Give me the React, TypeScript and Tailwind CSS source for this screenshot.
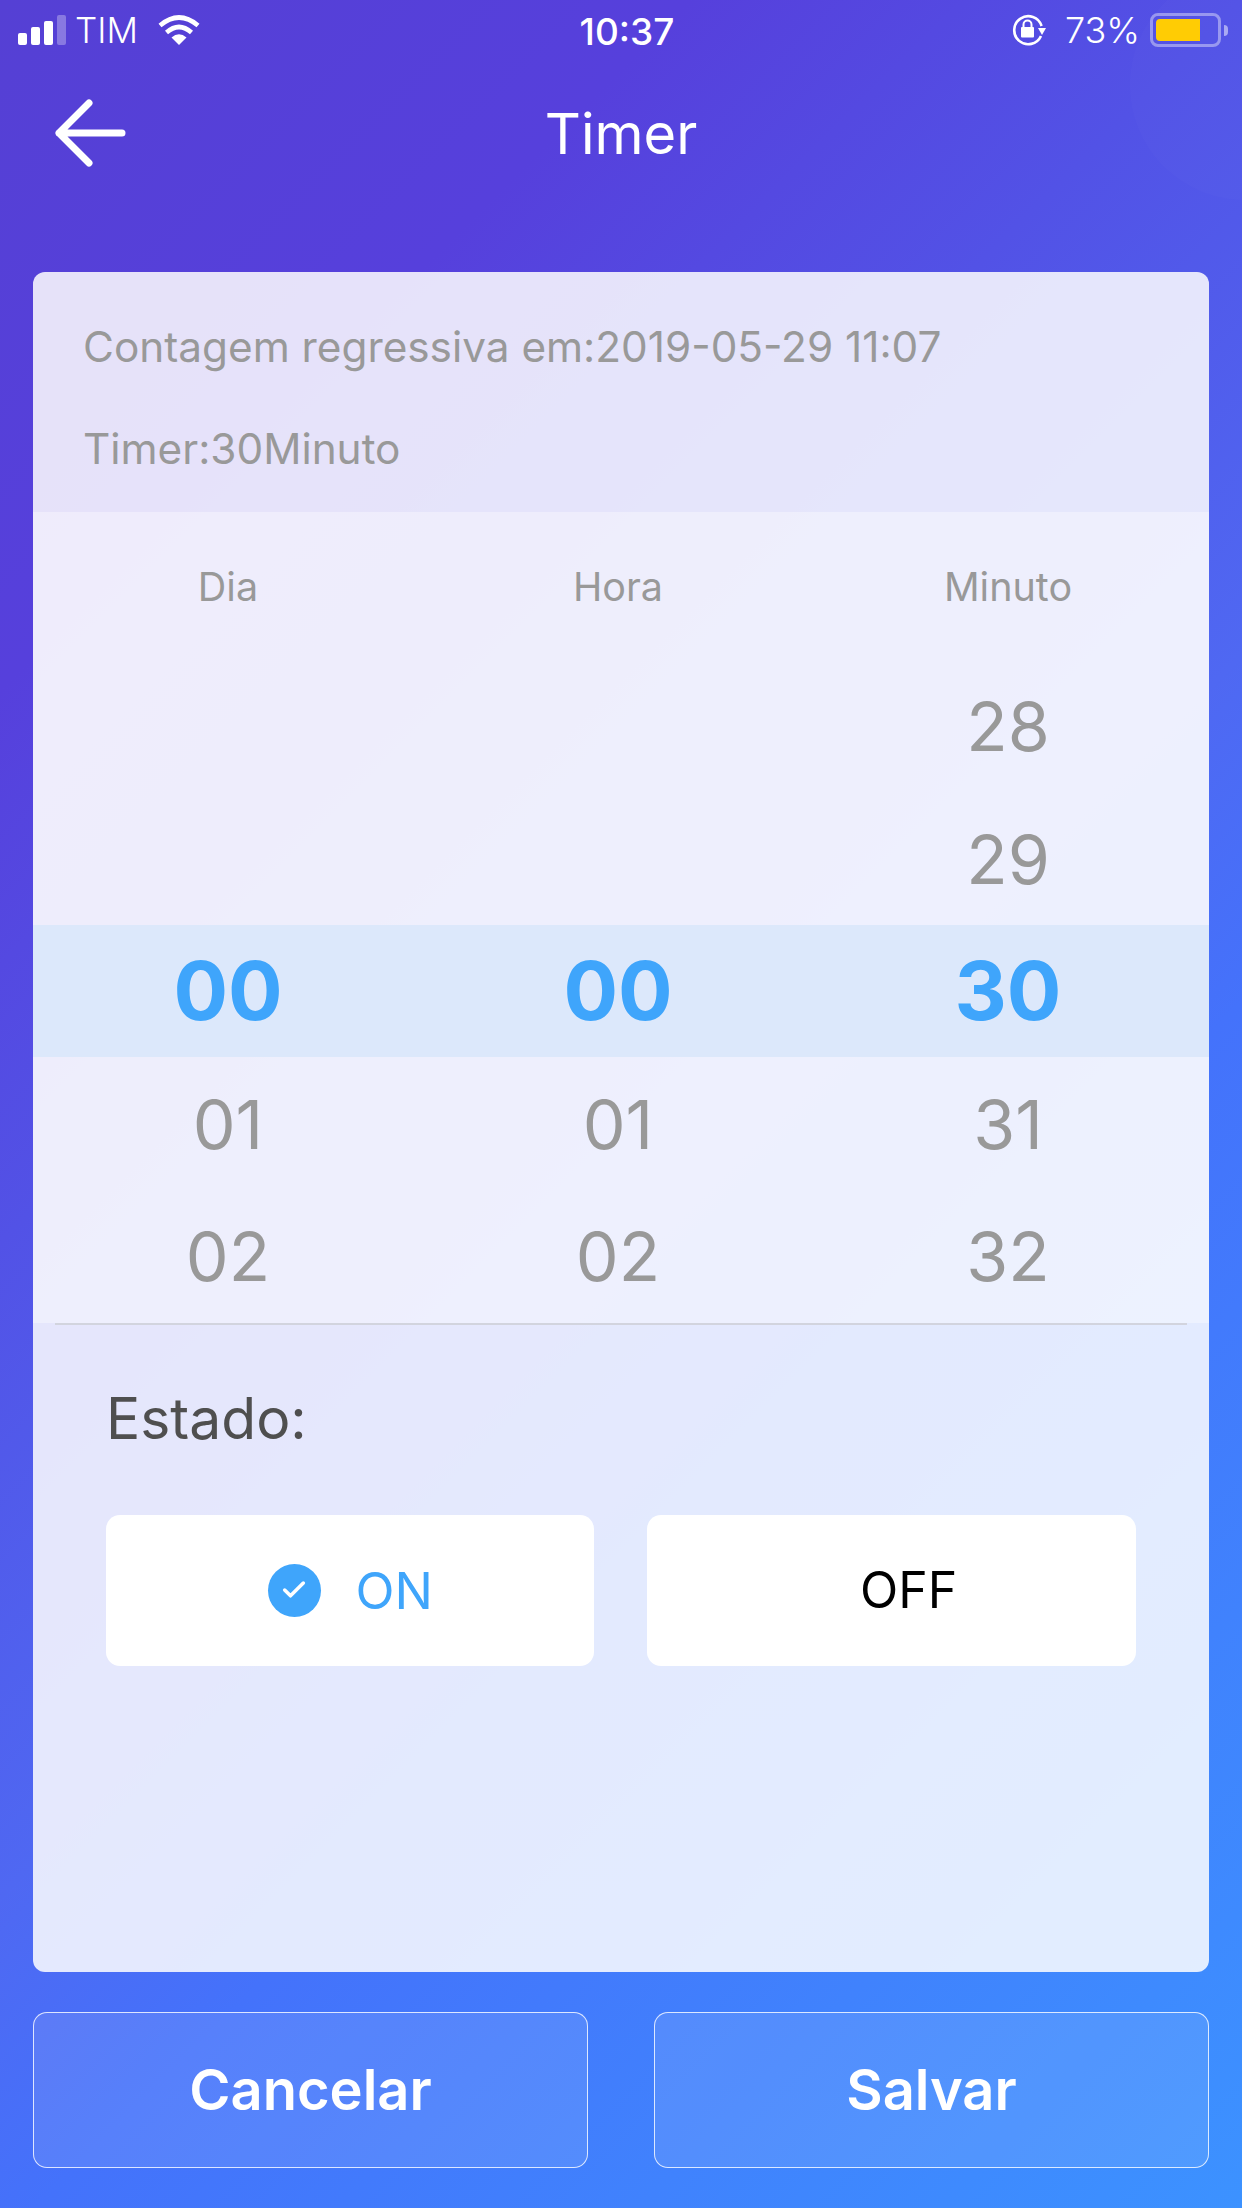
import React from 'react'
import { Check } from 'lucide-react'

const font = { fontFamily: 'Inter, "Noto Sans", sans-serif' }

function StatusBar() {
    return (
        <div className="grid h-[60px] grid-cols-[1fr_auto_1fr] items-center pl-[18px] pr-[14px] text-white">
            <div className="flex items-center">
                {/* signal bars */}
                <div className="flex items-end gap-[4px]">
                    <div className="h-[12px] w-[9px] rounded-[2px] bg-white" />
                    <div className="h-[18px] w-[9px] rounded-[2px] bg-white" />
                    <div className="h-[24px] w-[9px] rounded-[2px] bg-white" />
                    <div className="h-[30px] w-[9px] rounded-[2px] bg-white/30" />
                </div>
                <span className="ml-[9px] text-[35px] leading-none font-light">TIM</span>
                <svg className="ml-[20px]" width="42" height="30" viewBox="0 0 42 30">
                    <path d="M21 30 L13.5 22.5 Q21 16 28.5 22.5 Z" fill="#fff" />
                    <path d="M8.5 17.5 Q21 6.5 33.5 17.5" fill="none" stroke="#fff" strokeWidth="4.6" />
                    <path d="M2 10.5 Q21 -5.5 40 10.5" fill="none" stroke="#fff" strokeWidth="4.6" />
                </svg>
            </div>
            <span className="ml-[8px] pt-[2px] text-[37px] leading-none font-medium">10:37</span>
            <div className="flex items-center justify-end">
                {/* rotation lock */}
                <svg width="34" height="32" viewBox="0 0 34 32">
                    <path d="M29 22 A14 14 0 1 1 29.6 12" fill="none" stroke="#fff" strokeWidth="2.6" />
                    <path d="M26 14 H34 L30 21 Z" fill="#fff" />
                    <rect x="9" y="13" width="13" height="10.5" rx="1" fill="#fff" />
                    <path d="M11.5 13 V10.5 A4 4 0 0 1 19.5 10.5 V13" fill="none" stroke="#fff" strokeWidth="2" />
                </svg>
                <span className="ml-[19px] text-[36px] leading-none font-light">73%</span>
                <div className="ml-[10px] flex items-center">
                    <div className="flex h-[34px] w-[71px] rounded-[8px] border-[3px] border-white/40 p-[3px]">
                        <div className="h-full w-[44px] rounded-l-[4px] bg-[#ffcc00]" />
                    </div>
                    <div className="ml-[3px] h-[11px] w-[4px] rounded-r-[4px] bg-white/50" />
                </div>
            </div>
        </div>
    )
}

function Wheel({ items }: { items: string[] }) {
    return (
        <div className="flex flex-col items-center">
            {items.map((item, i) => (
                <div
                    key={i}
                    className={
                        i === 2
                            ? 'flex h-[132.5px] items-center text-[81px] font-bold text-[#3fa5fb]'
                            : 'flex h-[132.5px] items-center text-[68px] font-normal text-[#999999]'
                    }
                >
                    {item}
                </div>
            ))}
        </div>
    )
}

export default function App() {
    return (
        <div
            className="relative flex h-[2208px] w-[1242px] flex-col overflow-hidden bg-[linear-gradient(135deg,#5540d4_0%,#5640dc_20%,#5252e6_36%,#4f68f2_55%,#4472fb_65%,#3c92ff_100%)]"
            style={font}
        >
            {/* faint decoration behind the header */}
            <div className="absolute top-[-30px] left-[1130px] size-[230px] rounded-full bg-white/[0.015]" />

            <StatusBar />

            {/* Nav */}
            <div className="relative flex h-[148px] items-center justify-center text-white">
                <svg className="absolute left-[52px] top-[37px]" width="76" height="72" viewBox="0 0 76 72">
                    <path d="M37 6 L7 36 L37 66 M7 36 H70" fill="none" stroke="#fff" strokeWidth="7" strokeLinecap="round" strokeLinejoin="round" />
                </svg>
                <span className="text-[56px] leading-none font-normal">Timer</span>
            </div>

            {/* Card */}
            <div className="relative mx-[33px] mt-[64px] flex h-[1700px] flex-col overflow-hidden rounded-[12px] bg-white/85">
                <div className="flex h-[240px] flex-col gap-[54px] px-[50px] pt-[51px] text-[42.3px] leading-[48px] font-normal text-[#999999]">
                    <span>Contagem regressiva em:2019-05-29 11:07</span>
                    <span>Timer:30Minuto</span>
                </div>

                {/* Picker */}
                <div className="relative bg-white/35">
                    <div className="grid h-[148px] grid-cols-3 pr-[6px] text-center text-[39.5px] leading-[44px] font-normal text-[#999999]">
                        <span className="pt-[53px]">Dia</span>
                        <span className="pt-[53px]">Hora</span>
                        <span className="pt-[53px]">Minuto</span>
                    </div>
                    <div className="absolute inset-x-0 top-[413px] h-[132px] bg-[#dce8fb]" />
                    <div className="relative grid grid-cols-3 pr-[6px]">
                        <Wheel items={['', '', '00', '01', '02']} />
                        <Wheel items={['', '', '00', '01', '02']} />
                        <Wheel items={['28', '29', '30', '31', '32']} />
                    </div>
                </div>

                <div className="mx-[22px] h-[2px] bg-[#d2d4de]" />

                {/* Estado */}
                <div className="px-[73px] pt-[64px]">
                    <div className="text-[57px] leading-[60px] font-normal text-[#4f4f4f]">Estado:</div>
                    <div className="mt-[66px] flex gap-[53px]">
                        <div className="flex h-[151px] w-[489px] items-center justify-center gap-[35px] rounded-[14px] bg-white">
                            <div className="flex size-[53px] items-center justify-center rounded-full bg-[#3fa5fb]">
                                <Check className="size-[28px] text-white" strokeWidth={3} />
                            </div>
                            <span className="text-[51px] leading-none font-normal text-[#3fa5fb]">ON</span>
                        </div>
                        <div className="flex h-[151px] w-[489px] items-center justify-center rounded-[14px] bg-white pl-[34px] text-[50px] leading-none font-normal text-black">
                            OFF
                        </div>
                    </div>
                </div>
            </div>

            {/* Actions */}
            <div className="mx-[33px] mt-[40px] flex justify-between">
                <button type="button" className="h-[156px] w-[555px] rounded-[14px] border-[1.5px] border-white/80 bg-white/10 text-[56px] font-semibold text-white">
                    Cancelar
                </button>
                <button type="button" className="h-[156px] w-[555px] rounded-[14px] border-[1.5px] border-white/80 bg-white/10 text-[56px] font-semibold text-white">
                    Salvar
                </button>
            </div>
        </div>
    )
}
